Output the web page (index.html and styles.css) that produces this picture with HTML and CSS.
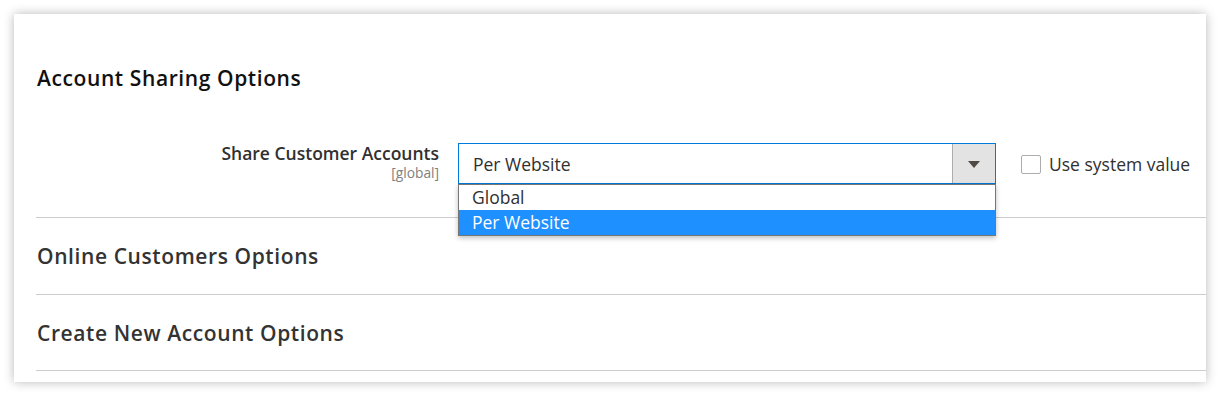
FILE: index.html
```html
<!DOCTYPE html>
<html lang="en">
<head>
<meta charset="utf-8">
<title>Account Sharing Options</title>
<link rel="stylesheet" href="styles.css">
</head>
<body>
<div class="panel">
  <section class="section section-open">
    <h2 class="title title-first">Account Sharing Options</h2>
    <div class="field">
      <div class="label">
        <span class="label-text">Share Customer Accounts</span>
        <span class="scope">[global]</span>
      </div>
      <div class="control">
        <div class="select">
          <span class="select-value">Per Website</span>
          <span class="select-btn"><span class="arrow"></span></span>
        </div>
        <ul class="dropdown">
          <li class="option">Global</li>
          <li class="option option-selected">Per Website</li>
        </ul>
      </div>
      <label class="use-default">
        <span class="checkbox"></span>
        <span class="use-text">Use system value</span>
      </label>
    </div>
  </section>
  <section class="section">
    <h2 class="title">Online Customers Options</h2>
  </section>
  <section class="section section-last">
    <h2 class="title">Create New Account Options</h2>
  </section>
</div>
</body>
</html>
```

FILE: styles.css
```css
* { box-sizing: border-box; }
html, body {
  margin: 0;
  padding: 0;
  background: #ffffff;
}
body {
  font-family: "Open Sans", "Noto Sans", "Liberation Sans", sans-serif;
  color: #303030;
  width: 1220px;
  height: 396px;
  overflow: hidden;
}
.panel {
  margin: 14px;
  width: 1192px;
  height: 368px;
  background: #ffffff;
  box-shadow: 0 0 10px rgba(0, 0, 0, 0.28);
  padding: 0 0 0 22px;
}
.section {
  border-bottom: 1px solid #cccccc;
  padding: 25px 0 25px;
}
.section-open {
  padding: 51px 0 33px;
}
.section-last {
  padding-bottom: 24px;
}
.title {
  margin: 0 0 0 1px;
  font-size: 21px;
  line-height: 26px;
  font-weight: 600;
  color: #333333;
  letter-spacing: 0.6px;
}
.title-first {
  color: #111111;
}
.field {
  margin-top: 52px;
  display: grid;
  grid-template-columns: 403px 538px auto;
  column-gap: 19px;
  align-items: start;
}
.label {
  display: flex;
  flex-direction: column;
  align-items: flex-end;
}
.label-text {
  font-size: 17.5px;
  line-height: 21px;
  font-weight: 600;
  color: #303030;
}
.scope {
  margin-top: 1px;
  font-size: 13.75px;
  line-height: 16px;
  color: #808080;
}
.control {
  position: relative;
}
.select {
  height: 41px;
  border: 1px solid #007bdb;
  display: flex;
  align-items: stretch;
  background: #ffffff;
}
.select-value {
  flex: 1;
  display: flex;
  align-items: center;
  padding-left: 14px;
  font-size: 17.5px;
  color: #303030;
}
.select-btn {
  width: 43px;
  background: #e3e3e3;
  border-left: 1px solid #adadad;
  display: flex;
  align-items: center;
  justify-content: center;
}
.arrow {
  width: 0;
  height: 0;
  border-left: 6px solid transparent;
  border-right: 6px solid transparent;
  border-top: 7px solid #514943;
  margin-top: 1px;
}
.dropdown {
  position: absolute;
  top: 41px;
  left: 0;
  width: 538px;
  margin: 0;
  padding: 0;
  list-style: none;
  background: #ffffff;
  border: 1px solid #767676;
  box-shadow: 0 2px 5px rgba(0, 0, 0, 0.25);
  z-index: 2;
}
.option {
  height: 25px;
  line-height: 25px;
  padding-left: 13px;
  font-size: 17.5px;
  color: #303030;
}
.option-selected {
  background: #1e90ff;
  color: #ffffff;
}
.use-default {
  display: flex;
  align-items: center;
  gap: 8px;
  margin-left: 6px;
  height: 41px;
}
.checkbox {
  width: 20px;
  height: 19px;
  border: 1px solid #adadad;
  border-radius: 2px;
  background: #ffffff;
  margin-top: 1px;
}
.use-text {
  font-size: 17.5px;
  color: #303030;
}
```
